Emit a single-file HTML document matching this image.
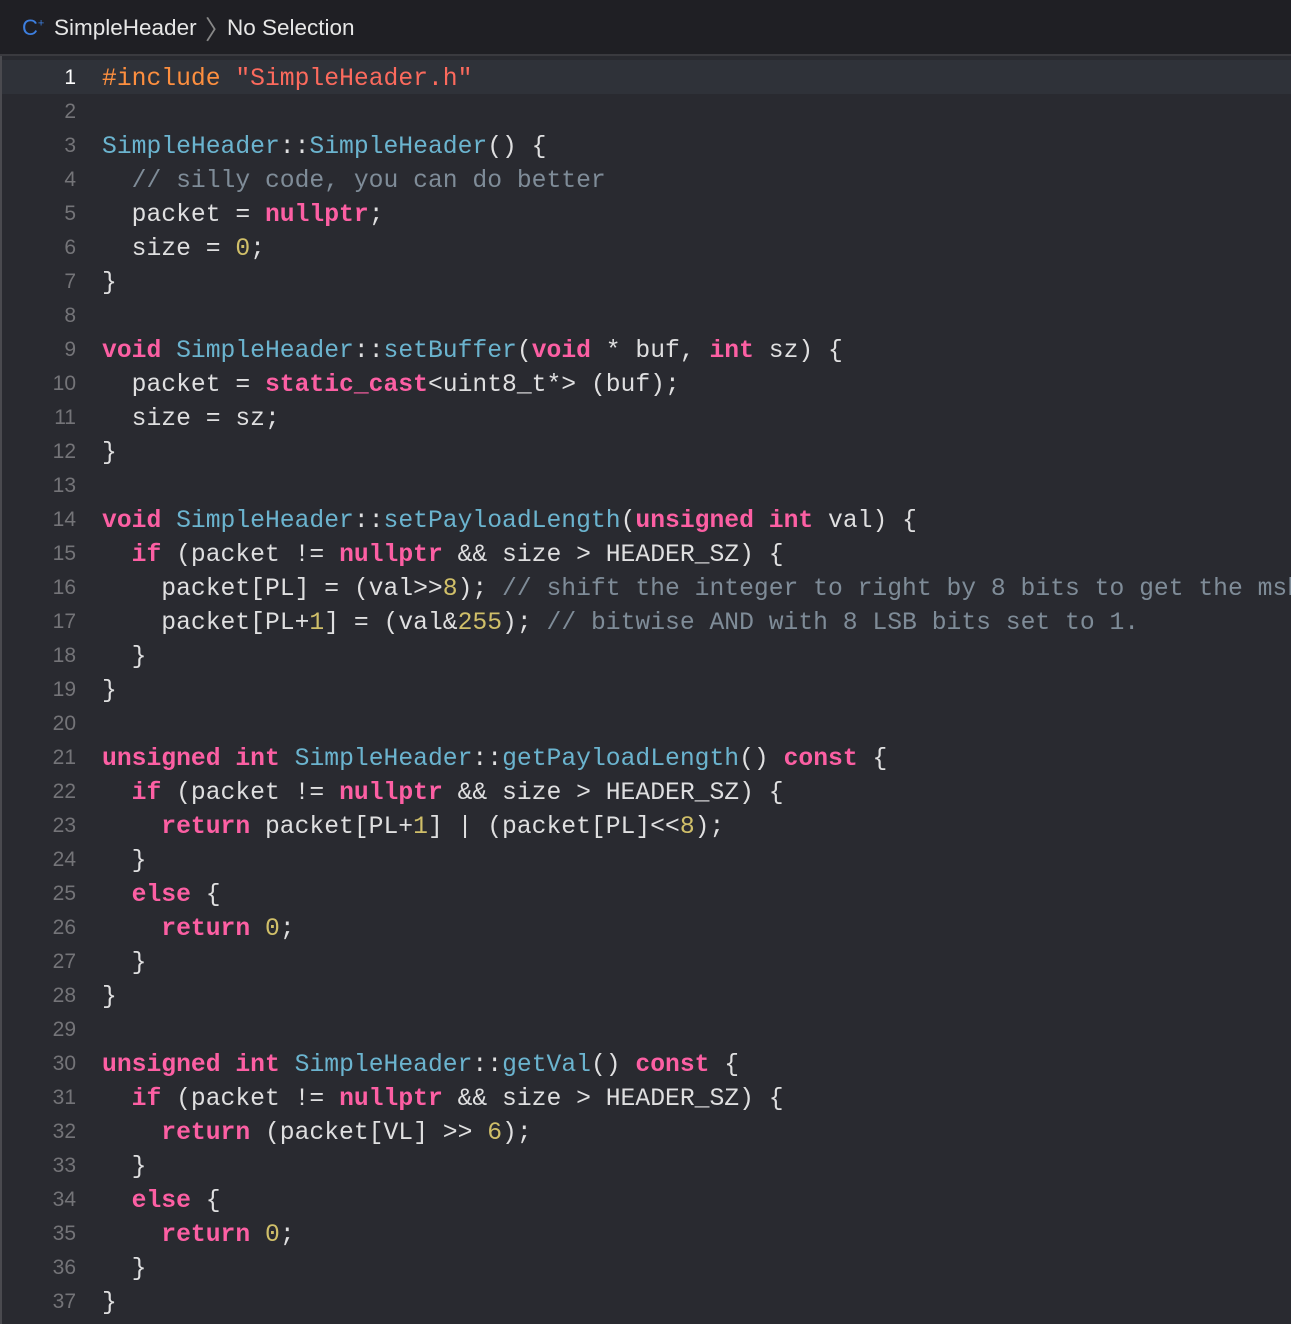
<!DOCTYPE html>
<html><head><meta charset="utf-8"><style>
body{margin:0;width:1291px;height:1324px;background:#292a30;overflow:hidden;position:relative;font-family:"Liberation Mono",monospace}
.hdr{position:absolute;left:0;top:0;width:1291px;height:54px;background:#1f1f24;border-bottom:2px solid #3a3a3f;font-family:"Liberation Sans",sans-serif;color:#e6e6e6;font-size:22.5px}
.hdr span{position:absolute;top:15px}
.lb{position:absolute;left:0;top:56px;width:2px;height:1268px;background:#4a4a4f}
.cur{position:absolute;left:2px;top:60px;width:1289px;height:34px;background:#2f3239}
.code{position:absolute;top:62px;left:0;font-size:24.7px;line-height:34px;color:#dfdfe0;white-space:pre}
.ln{position:absolute;left:30px;width:46px;text-align:right;color:#747478;top:61px;font-family:"Liberation Sans",sans-serif;font-size:21px;line-height:34px}
.k{color:#fc5fa3;font-weight:bold}.t{color:#6bb4cf}.p{color:#fd8f3f}.s{color:#fc6a5d}.n{color:#d0bf69}.c{color:#7f8c98}
</style></head><body>
<div class="hdr"><span style="left:22px;color:#3d7fe0;font-size:22px">C<sup style="font-size:11px">+</sup></span><span style="left:54px">SimpleHeader</span><span style="left:205px;color:#888;font-size:26px;top:10px">〉</span><span style="left:227px">No Selection</span></div>
<div class="lb"></div><div class="cur"></div>
<div class="ln"><div style="color:#fff">1</div><div>2</div><div>3</div><div>4</div><div>5</div><div>6</div><div>7</div><div>8</div><div>9</div><div>10</div><div>11</div><div>12</div><div>13</div><div>14</div><div>15</div><div>16</div><div>17</div><div>18</div><div>19</div><div>20</div><div>21</div><div>22</div><div>23</div><div>24</div><div>25</div><div>26</div><div>27</div><div>28</div><div>29</div><div>30</div><div>31</div><div>32</div><div>33</div><div>34</div><div>35</div><div>36</div><div>37</div></div>
<div class="code" style="left:102px"><span class="p">#include</span> <span class="s">"SimpleHeader.h"</span>

<span class="t">SimpleHeader</span>::<span class="t">SimpleHeader</span>() {
  <span class="c">// silly code, you can do better</span>
  packet = <span class="k">nullptr</span>;
  size = <span class="n">0</span>;
}

<span class="k">void</span> <span class="t">SimpleHeader</span>::<span class="t">setBuffer</span>(<span class="k">void</span> * buf, <span class="k">int</span> sz) {
  packet = <span class="k">static_cast</span>&lt;uint8_t*&gt; (buf);
  size = sz;
}

<span class="k">void</span> <span class="t">SimpleHeader</span>::<span class="t">setPayloadLength</span>(<span class="k">unsigned</span> <span class="k">int</span> val) {
  <span class="k">if</span> (packet != <span class="k">nullptr</span> &amp;&amp; size &gt; HEADER_SZ) {
    packet[PL] = (val&gt;&gt;<span class="n">8</span>); <span class="c">// shift the integer to right by 8 bits to get the msb</span>
    packet[PL+<span class="n">1</span>] = (val&amp;<span class="n">255</span>); <span class="c">// bitwise AND with 8 LSB bits set to 1.</span>
  }
}

<span class="k">unsigned</span> <span class="k">int</span> <span class="t">SimpleHeader</span>::<span class="t">getPayloadLength</span>() <span class="k">const</span> {
  <span class="k">if</span> (packet != <span class="k">nullptr</span> &amp;&amp; size &gt; HEADER_SZ) {
    <span class="k">return</span> packet[PL+<span class="n">1</span>] | (packet[PL]&lt;&lt;<span class="n">8</span>);
  }
  <span class="k">else</span> {
    <span class="k">return</span> <span class="n">0</span>;
  }
}

<span class="k">unsigned</span> <span class="k">int</span> <span class="t">SimpleHeader</span>::<span class="t">getVal</span>() <span class="k">const</span> {
  <span class="k">if</span> (packet != <span class="k">nullptr</span> &amp;&amp; size &gt; HEADER_SZ) {
    <span class="k">return</span> (packet[VL] &gt;&gt; <span class="n">6</span>);
  }
  <span class="k">else</span> {
    <span class="k">return</span> <span class="n">0</span>;
  }
}</div>
</body></html>
